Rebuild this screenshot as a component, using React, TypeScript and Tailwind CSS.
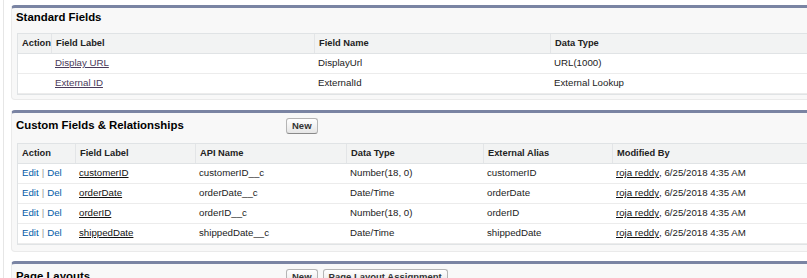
import React from "react";

type Col = { label: string; width: string };

const stdCols: Col[] = [
  { label: "Action", width: "w-[33px]" },
  { label: "Field Label", width: "w-[263px]" },
  { label: "Field Name", width: "w-[236px]" },
  { label: "Data Type", width: "w-[440px]" },
];

const stdRows = [
  { label: "Display URL", name: "DisplayUrl", type: "URL(1000)" },
  { label: "External ID", name: "ExternalId", type: "External Lookup" },
];

const customCols: Col[] = [
  { label: "Action", width: "w-[57px]" },
  { label: "Field Label", width: "w-[120px]" },
  { label: "API Name", width: "w-[151px]" },
  { label: "Data Type", width: "w-[137px]" },
  { label: "External Alias", width: "w-[129px]" },
  { label: "Modified By", width: "w-[378px]" },
];

const customRows = [
  { label: "customerID", api: "customerID__c", type: "Number(18, 0)", alias: "customerID" },
  { label: "orderDate", api: "orderDate__c", type: "Date/Time", alias: "orderDate" },
  { label: "orderID", api: "orderID__c", type: "Number(18, 0)", alias: "orderID" },
  { label: "shippedDate", api: "shippedDate__c", type: "Date/Time", alias: "shippedDate" },
];

const Button = ({ children }: { children: React.ReactNode }) => (
  <button className="h-[16px] px-[5px] rounded-[3px] border border-[#b5b5b5] border-b-[#8a8a8a] bg-gradient-to-b from-white to-[#e6e6e6] text-[9.5px] font-bold text-[#333] leading-none">
    {children}
  </button>
);

const HeaderRow = ({ cols }: { cols: Col[] }) => (
  <div className="flex h-[20px] bg-[#f2f3f3] border-b border-[#e0e3e5]">
    {cols.map((c, i) => (
      <div
        key={c.label}
        className={`${c.width} shrink-0 flex items-center pl-[4px] font-bold text-[9.3px] text-[#222] ${i > 0 ? "border-l border-[#e3e5e7]" : ""}`}
      >
        {c.label}
      </div>
    ))}
  </div>
);

const Cell = ({ width, children }: { width: string; children?: React.ReactNode }) => (
  <div className={`${width} shrink-0 flex items-center pl-[4px] whitespace-nowrap`}>{children}</div>
);

const Panel = ({
  title,
  buttons,
  header,
  bottom,
  children,
}: {
  title: string;
  buttons?: React.ReactNode;
  header: string;
  bottom?: string;
  children?: React.ReactNode;
}) => (
  <div className={`w-[1000px] bg-[#f8f8f8] border border-[#eaeaea] border-t-[3px] border-t-[#7a84a3] rounded-[4px] ${bottom ?? ""}`}>
    <div className={`flex items-center pl-[4px] ${header}`}>
      <h2 className="w-[270px] text-[11.4px] font-bold text-[#000]">{title}</h2>
      {buttons && <div className="flex gap-[5px]">{buttons}</div>}
    </div>
    {children}
  </div>
);

export default function App() {
  return (
    <div className="w-[807px] h-[278px] overflow-hidden bg-white font-['Liberation_Sans',Arial,sans-serif] text-[9.7px] text-[#222]">
      <div className="ml-[3px] h-full border-l border-[#e6e6e6] pl-[7px] pt-[5px]">
        <Panel title="Standard Fields" header="h-[25px] pb-[5px]" bottom="pb-[4px]">
          <div className="ml-[5px] w-[972px] border border-[#e0e3e5] bg-white">
            <HeaderRow cols={stdCols} />
            {stdRows.map((r) => (
              <div key={r.label} className="flex h-[20px] border-b border-[#ececec]">
                <Cell width="w-[33px]" />
                <Cell width="w-[263px]">
                  <a className="underline text-[#4a3a5a]">{r.label}</a>
                </Cell>
                <Cell width="w-[236px]">{r.name}</Cell>
                <Cell width="w-[440px]">{r.type}</Cell>
              </div>
            ))}
          </div>
        </Panel>

        <div className="mt-[10px]">
          <Panel
            title="Custom Fields & Relationships"
            header="h-[30px] pb-[4px]"
            bottom="pb-[6px]"
            buttons={<Button>New</Button>}
          >
            <div className="ml-[5px] w-[972px] border border-[#e0e3e5] bg-white">
              <HeaderRow cols={customCols} />
              {customRows.map((r) => (
                <div key={r.label} className="flex h-[20px] border-b border-[#ececec]">
                  <Cell width="w-[57px]">
                    <a className="text-[#015ba7]">Edit</a>
                    <span className="text-[#999] px-[3px]">|</span>
                    <a className="text-[#015ba7]">Del</a>
                  </Cell>
                  <Cell width="w-[120px]">
                    <a className="underline text-[#111]">{r.label}</a>
                  </Cell>
                  <Cell width="w-[151px]">{r.api}</Cell>
                  <Cell width="w-[137px]">{r.type}</Cell>
                  <Cell width="w-[129px]">{r.alias}</Cell>
                  <Cell width="w-[378px]">
                    <a className="underline text-[#111]">roja reddy</a>
                    <span>, 6/25/2018 4:35 AM</span>
                  </Cell>
                </div>
              ))}
            </div>
          </Panel>
        </div>

        <div className="mt-[9px]">
          <Panel
            title="Page Layouts"
            header="h-[30px] pb-[4px]"
            buttons={
              <>
                <Button>New</Button>
                <Button>Page Layout Assignment</Button>
              </>
            }
          />
        </div>
      </div>
    </div>
  );
}
